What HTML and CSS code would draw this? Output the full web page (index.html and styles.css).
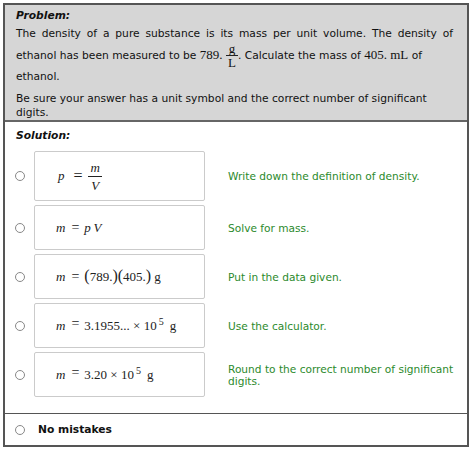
FILE: index.html
```html
<!DOCTYPE html>
<html lang="en">
<head>
  <meta charset="UTF-8" />
  <title>Problem</title>
  <link rel="stylesheet" href="styles.css">
</head>
<body>
  <div class="quiz">
    <div class="problem">
      <p class="label">Problem:</p>
      <p class="line-text">The density of a pure substance is its mass per unit volume. The density of ethanol has been measured to be <span class="m">789.</span> <span class="frac"><span class="num">g</span><span class="den">L</span></span>. Calculate the mass of <span class="m">405. mL</span> of<br>ethanol.</p>
      <p>Be sure your answer has a unit symbol and the correct number of significant digits.</p>
    </div>

    <div class="solution">
      <p class="label">Solution:</p>

      <div class="step tall">
        <span class="radio"></span>
        <div class="eq"><i>p</i><span class="eqs wide">=</span><span class="frac"><span class="num"><i>m</i></span><span class="den"><i>V</i></span></span></div>
        <div class="note">Write down the definition of density.</div>
      </div>

      <div class="step">
        <span class="radio"></span>
        <div class="eq"><i>m</i><span class="eqs">=</span><i>p</i>&thinsp;<i>V</i></div>
        <div class="note">Solve for mass.</div>
      </div>

      <div class="step">
        <span class="radio"></span>
        <div class="eq"><i>m</i><span class="eqs">=</span><span class="par">(</span>789.<span class="par">)(</span>405.<span class="par">)</span>&nbsp;g</div>
        <div class="note">Put in the data given.</div>
      </div>

      <div class="step">
        <span class="radio"></span>
        <div class="eq"><i>m</i><span class="eqs up">=</span>3.1955... &times; 10<sup>5</sup> g</div>
        <div class="note">Use the calculator.</div>
      </div>

      <div class="step">
        <span class="radio"></span>
        <div class="eq"><i>m</i><span class="eqs up">=</span>3.20 &times; 10<sup>5</sup> g</div>
        <div class="note">Round to the correct number of significant digits.</div>
      </div>
    </div>

    <div class="none">
      <span class="radio"></span>
      <b>No mistakes</b>
    </div>
  </div>
</body>
</html>
```

FILE: styles.css
```css
* {
  margin: 0; padding: 0; box-sizing: border-box;
}
body {
  font-family: "DejaVu Sans", Verdana, sans-serif;
  font-size: 10.7px;
  color: #111;
  background: #fff;
  padding: 3px;
}
.quiz {
  width: 466px;
  border: 2px solid #555;
}
.problem {
  background: #d6d6d6;
  padding: 4px 14px 0 11px;
  border-bottom: 2px solid #666;
}
.problem p {
  line-height: 14px;
}
.label {
  font-weight: bold;
  font-style: italic;
}
.line-text {
  line-height: 21px !important;
  margin-bottom: 5px;
  text-align: justify;
}
.m {
  font-family: "Liberation Serif", serif;
  font-size: 13px;
}
.frac {
  display: inline-flex;
  flex-direction: column;
  align-items: center;
  vertical-align: middle;
  margin: -3px 0;
  font-family: "Liberation Serif", serif;
  font-size: 13px;
  line-height: 12px;
}
.frac .den {
  border-top: 1px solid #222;
  padding: 1px 2px 0;
}
.frac .num {
  padding: 0 2px;
}
.eq .frac {
  margin: 0;
  line-height: 13px;
  vertical-align: baseline;
}
.eq .frac .num {
  padding: 0 3px 2px;
}
.eq .frac .den {
  padding: 2px 3px 0;
}
.solution {
  padding: 7px 0 16px 0;
  border-bottom: 1px solid #555;
}
.solution .label {
  padding-left: 11px;
  line-height: 14px;
  margin-bottom: 8px;
}
.step {
  display: grid;
  grid-template-columns: 20px 171px 1fr;
  column-gap: 9px;
  align-items: center;
  margin-bottom: 4px;
}
.step:last-child {
  margin-bottom: 0;
}
.radio {
  justify-self: end;
  width: 10px;
  height: 10px;
  border: 1px solid #888;
  border-radius: 50%;
  background: #fff;
}
.eq {
  height: 45px;
  border: 1px solid #cbcbcb;
  border-radius: 2px;
  display: flex;
  align-items: center;
  padding-left: 21px;
  font-family: "Liberation Serif", serif;
  font-size: 13px;
  color: #222;
}
.step.tall .eq {
  height: 50px;
  padding-left: 23px;
}
.eqs {
  font-size: 14px;
  margin: 0 5px 0 6px;
}
.eqs.wide {
  font-size: 16px;
  margin: 0 5px 0 9px;
}
.eqs.up {
  position: relative;
  top: -2px;
}
.par {
  font-size: 16px;
  line-height: 1;
  margin-top: -2px;
}
.eq sup {
  font-size: 10px;
  position: relative;
  top: -4px;
  margin-left: 2px;
  margin-right: 6px;
}
.note {
  margin-left: 14px;
  color: #2c8a2c;
  font-size: 10.6px;
  padding-right: 8px;
  line-height: 12px;
}
.none {
  display: flex;
  align-items: center;
  gap: 13px;
  height: 31px;
  padding-left: 10px;
}
```
